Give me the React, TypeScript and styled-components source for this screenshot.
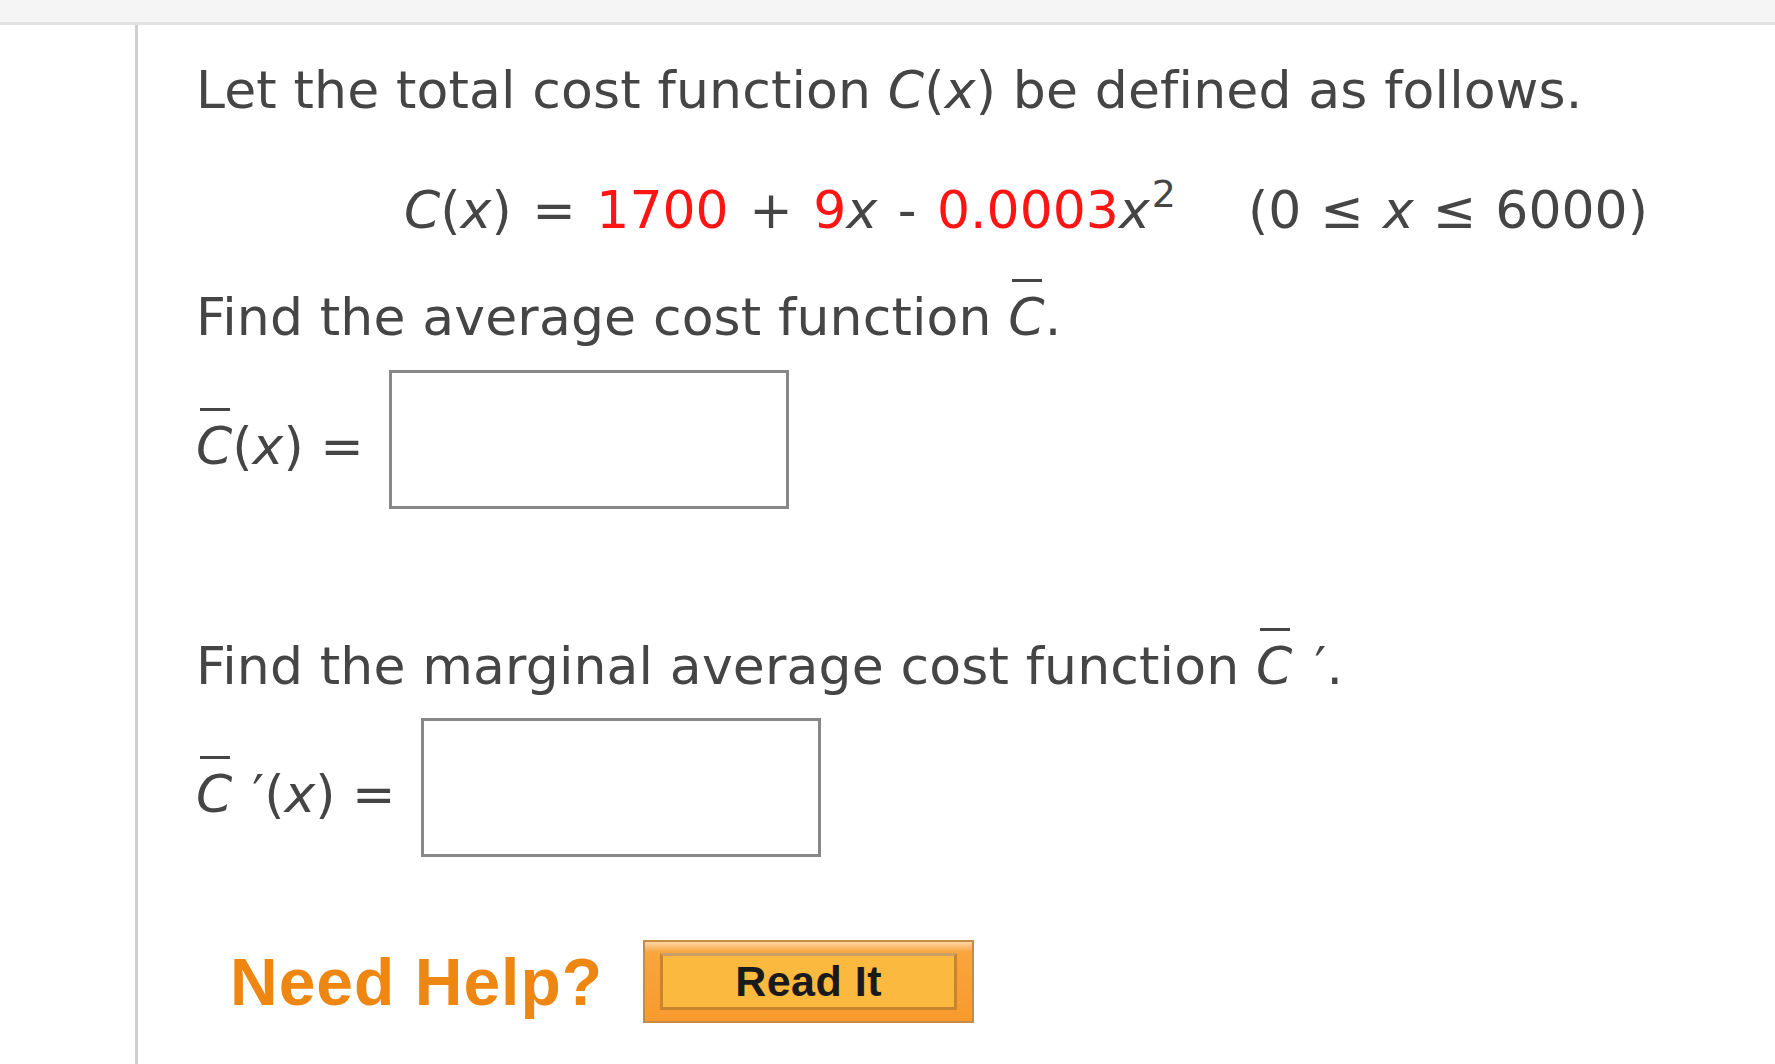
import styled, { createGlobalStyle } from 'styled-components'

// page

const GlobalStyle = createGlobalStyle`
  html, body {
    margin: 0;
    padding: 0;
    background: #ffffff;
  }
  body {
    font-family: "DejaVu Sans", Verdana, sans-serif;
    color: #454545;
  }
`

const Page = styled.div`
  width: 1775px;
  min-height: 1064px;
  display: flex;
  flex-direction: column;
  overflow: hidden;
`

const TopBar = styled.div`
  height: 22px;
  background: #f5f5f5;
  border-bottom: 3px solid #e2e2e2;
`

const Main = styled.div`
  flex: 1;
  display: flex;
`

const Gutter = styled.div`
  width: 135px;
  flex-shrink: 0;
`

const Content = styled.div`
  flex: 1;
  border-left: 3px solid #cfcfcf;
  padding: 35px 0 0 58px;
  display: flex;
  flex-direction: column;
  align-items: flex-start;
`

// text

const Paragraph = styled.p<{ $top: number }>`
  margin: ${(p) => p.$top}px 0 0 0;
  font-size: 52px;
  line-height: 60px;
  letter-spacing: 0.15px;
  white-space: nowrap;
`

const FormulaLine = styled.div`
  margin: 60px 0 0 208px;
  font-size: 52px;
  line-height: 60px;
  word-spacing: 4px;
  white-space: nowrap;
`

const Var = styled.span`
  font-style: italic;
`

const Num = styled.span`
  color: #ff1414;
`

const Sup = styled.span`
  font-size: 38px;
  line-height: 0;
  vertical-align: 21px;
  margin-left: 2px;
`

const Range = styled.span`
  margin-left: 72px;
  word-spacing: 2.5px;
`

const Overbar = styled.span<{ $lift: number }>`
  position: relative;
  font-style: italic;

  &::before {
    content: '';
    position: absolute;
    left: 4px;
    width: 30px;
    top: ${(p) => p.$lift}px;
    height: 3px;
    background: #454545;
  }
`

const Prime = styled.span<{ $gap: number }>`
  margin-left: ${(p) => p.$gap}px;
`

// answers

const AnswerRow = styled.div<{ $top: number }>`
  margin-top: ${(p) => p.$top}px;
  display: flex;
  align-items: center;
  gap: 25px;
`

const Label = styled.span`
  font-size: 52px;
  line-height: 60px;
  padding-top: 12px;
  white-space: nowrap;
`

const AnswerBox = styled.input`
  box-sizing: border-box;
  width: 400px;
  height: 139px;
  border: 3px solid #878787;
  background: #ffffff;
  outline: none;
  padding: 0 10px;
  font-size: 40px;
`

// help

const HelpRow = styled.div`
  margin: 83px 0 0 34px;
  display: flex;
  align-items: center;
  gap: 40px;
`

const HelpText = styled.span`
  font-family: "Liberation Sans", Arial, sans-serif;
  font-weight: 700;
  font-size: 66px;
  color: #ee8612;
  letter-spacing: 1px;
  line-height: 80px;
`

const ReadButton = styled.button`
  box-sizing: border-box;
  width: 331px;
  height: 83px;
  padding: 11px 15px;
  border: 2px solid #c98a45;
  background: linear-gradient(#fcd6a6 0px, #f9a53c 10px, #f89a2e 100%);
  cursor: pointer;
  display: flex;
`

const ReadInner = styled.span`
  flex: 1;
  border: 3px solid #c8842f;
  border-top-color: #caa06a;
  background: #fbb940;
  display: flex;
  align-items: center;
  justify-content: center;
  font-family: "Liberation Sans", Arial, sans-serif;
  font-weight: 700;
  font-size: 43px;
  letter-spacing: 0.5px;
  color: #1a1a1a;
`

const App = () => {
  return (
    <Page>
      <GlobalStyle />
      <TopBar />
      <Main>
        <Gutter />
        <Content>
          <Paragraph $top={0}>
            Let the total cost function <Var>C</Var>(<Var>x</Var>) be defined as follows.
          </Paragraph>

          <FormulaLine>
            <Var>C</Var>(<Var>x</Var>) = <Num>1700</Num> + <Num>9</Num><Var>x</Var> - <Num>0.0003</Num>
            <Var>x</Var>
            <Sup>2</Sup>
            <Range>
              (0 ≤ <Var>x</Var> ≤ 6000)
            </Range>
          </FormulaLine>

          <Paragraph $top={47}>
            Find the average cost function <Overbar $lift={-8}>C</Overbar>.
          </Paragraph>

          <AnswerRow $top={23}>
            <Label>
              <Overbar $lift={-8}>C</Overbar>(<Var>x</Var>) =
            </Label>
            <AnswerBox type="text" />
          </AnswerRow>

          <Paragraph $top={127}>
            Find the marginal average cost function <Overbar $lift={-8}>C</Overbar>
            <Prime $gap={22}>′</Prime>.
          </Paragraph>

          <AnswerRow $top={22}>
            <Label>
              <Overbar $lift={-8}>C</Overbar>
              <Prime $gap={20}>′</Prime>(<Var>x</Var>) =
            </Label>
            <AnswerBox type="text" />
          </AnswerRow>

          <HelpRow>
            <HelpText>Need Help?</HelpText>
            <ReadButton type="button">
              <ReadInner>Read It</ReadInner>
            </ReadButton>
          </HelpRow>
        </Content>
      </Main>
    </Page>
  )
}

export default App
